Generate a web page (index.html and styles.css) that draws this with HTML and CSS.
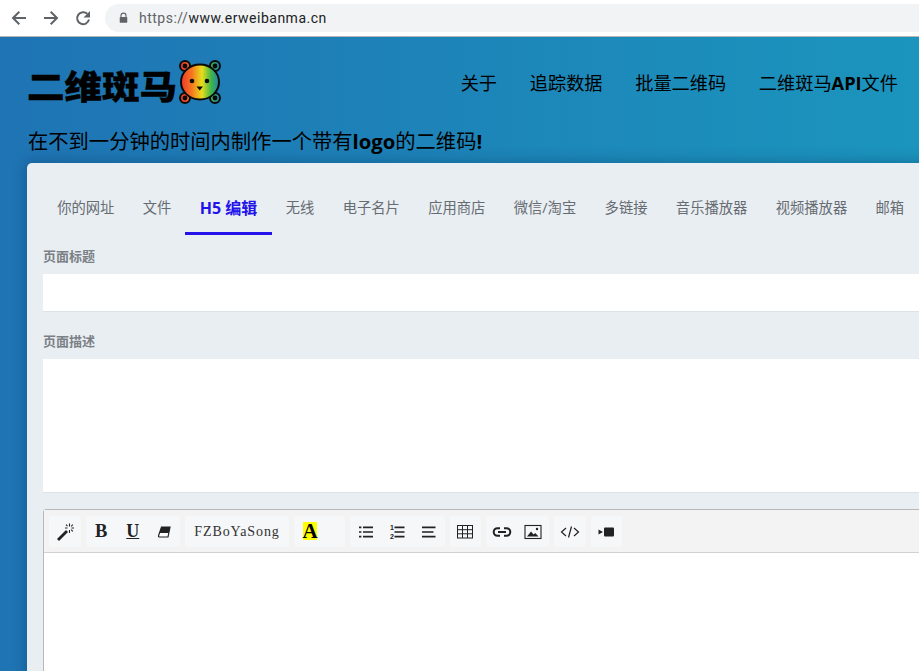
FILE: index.html
```html
<!DOCTYPE html>
<html lang="zh">
<head>
<meta charset="utf-8">
<title>二维斑马</title>
<link rel="stylesheet" href="styles.css">
</head>
<body>
<div class="browserbar">
  <svg class="navicon" viewBox="0 0 16 16"><path d="M15 8H2.500M8.300 1.700L2 8l6.300 6.300" fill="none" stroke="#5f6368" stroke-width="2"/></svg>
  <svg class="navicon" viewBox="0 0 16 16"><path d="M1 8H13.500M7.700 1.700L14 8l-6.300 6.300" fill="none" stroke="#5f6368" stroke-width="2"/></svg>
  <svg class="navicon" viewBox="0 0 16 16"><path d="M14 9.600A6 6 0 1 1 12.300 3.800" fill="none" stroke="#5f6368" stroke-width="2"/><path d="M15 1V7.500H8.500z" fill="#5f6368"/></svg>
  <div class="urlbox">
    <svg class="lock" viewBox="0 0 10 12"><path d="M2.200 5V3.400a2.800 2.800 0 0 1 5.600 0V5" fill="none" stroke="#5f6368" stroke-width="1.200"/><rect x="0.800" y="4.800" width="8.400" height="6.600" rx="1" fill="#5f6368"/></svg>
    <span class="url"><span class="scheme">https://</span>www.erweibanma.cn</span>
  </div>
</div>
<div class="hero">
  <header class="topnav">
    <div class="logo">
      <span class="logotext">二维斑马</span>
      <svg class="logoicon" viewBox="0 0 42 44">
        <defs><linearGradient id="rainbow" gradientUnits="userSpaceOnUse" x1="1" x2="41" y1="0" y2="0"><stop offset="0" stop-color="#ee2f2c"/><stop offset=".3" stop-color="#f5791f"/><stop offset=".55" stop-color="#e6df1c"/><stop offset=".78" stop-color="#3fb548"/><stop offset="1" stop-color="#1d7fb5"/></linearGradient></defs>
        <g fill="url(#rainbow)" stroke="#0a0a0a" stroke-width="2">
          <circle cx="6" cy="6" r="5"/><circle cx="36" cy="6" r="5"/><circle cx="6" cy="38" r="5"/><circle cx="36" cy="38" r="5"/>
          <ellipse cx="21" cy="22" rx="19" ry="17.500"/>
        </g>
        <g fill="#0a0a0a"><circle cx="6" cy="6" r="2.400"/><circle cx="36" cy="6" r="2.400"/><circle cx="6" cy="38" r="2.400"/><circle cx="36" cy="38" r="2.400"/><circle cx="13" cy="21" r="2.300"/><circle cx="28" cy="21" r="2.300"/><path d="M17.500 26.500h6.500L20.700 30.500z"/></g>
      </svg>
    </div>
    <nav class="menu">
      <a>关于</a><a>追踪数据</a><a>批量二维码</a><a>二维斑马<b>API</b>文件</a>
    </nav>
  </header>
  <h1 class="tagline">在不到一分钟的时间内制作一个带有<b>logo</b>的二维码<b>!</b></h1>
  <main class="card">
    <div class="tabs">
      <a class="tab">你的网址</a><a class="tab">文件</a><a class="tab active">H5 编辑</a><a class="tab">无线</a><a class="tab">电子名片</a><a class="tab">应用商店</a><a class="tab">微信/淘宝</a><a class="tab">多链接</a><a class="tab">音乐播放器</a><a class="tab">视频播放器</a><a class="tab">邮箱</a>
    </div>
    <label class="fieldlabel first">页面标题</label>
    <div class="field short"></div>
    <label class="fieldlabel">页面描述</label>
    <div class="field tall"></div>
    <section class="editor">
      <div class="toolbar">
        <div class="group"><span class="btn"><svg viewBox="0 0 20 20"><path d="M2 17L11 8l2 2-9 9z" fill="#222"/><path d="M14.500 1.500v3M14.500 8v3M10 6h2.500M16.500 6H19M17.800 2.700l-1.600 1.600M17.800 9.300l-1.600-1.600M11 2.700l1.500 1.500" stroke="#222" stroke-width="1.100"/></svg></span></div>
        <div class="group">
          <span class="btn glyph bold">B</span>
          <span class="btn glyph under">U</span>
          <span class="btn"><svg viewBox="0 0 20 20"><path d="M7.500 5h8.500l-2 10H5.500a1 1 0 0 1-1-1.200z" fill="#fff" stroke="#222" stroke-width="1.200"/><path d="M7.500 5h8.500l-1.200 6H5.300z" fill="#222"/></svg></span>
        </div>
        <div class="group fontname">FZBoYaSong</div>
        <div class="group colorgroup"><span class="btn glyph coloura">A</span></div>
        <div class="group">
          <span class="btn"><svg viewBox="0 0 20 20"><path d="M7 5.300h10M7 10h10M7 14.700h10M3 5.300h2.400M3 10h2.400M3 14.700h2.400" stroke="#222" stroke-width="1.700"/></svg></span>
          <span class="btn"><svg viewBox="0 0 20 20"><path d="M7.500 5.300h10M7.500 10h10M7.500 14.700h10" stroke="#222" stroke-width="1.700"/><text x="3" y="8" class="num">1</text><text x="3" y="17" class="num">2</text></svg></span>
          <span class="btn"><svg viewBox="0 0 20 20"><path d="M3 5.300h13.500M3 10h11.500M3 14.700h13.500" stroke="#222" stroke-width="1.700"/></svg></span>
        </div>
        <div class="group"><span class="btn"><svg viewBox="0 0 20 20"><rect x="2.500" y="3.500" width="15" height="12.500" fill="none" stroke="#222" stroke-width="1"/><path d="M2.500 7.700h15M2.500 11.800h15M7.500 3.500V16M12.500 3.500V16" stroke="#222" stroke-width="1"/></svg></span></div>
        <div class="group">
          <span class="btn"><svg viewBox="0 0 20 20"><path d="M8 6.200H5.500a3.800 3.800 0 0 0 0 7.600H8M12 6.200h2.500a3.800 3.800 0 0 1 0 7.600H12M6 10h8" fill="none" stroke="#222" stroke-width="2"/></svg></span>
          <span class="btn"><svg viewBox="0 0 20 20"><rect x="2" y="3.500" width="16" height="13" fill="none" stroke="#222" stroke-width="1.100"/><path d="M4 14.500l4-5 2.600 3 1.600-1.600 3.400 3.600z" fill="#222"/><circle cx="14" cy="7" r="1.200" fill="#222"/></svg></span>
        </div>
        <div class="group"><span class="btn"><svg viewBox="0 0 20 20"><path d="M6 6l-4.500 4L6 14M14 6l4.500 4L14 14M11.500 4.500L8.500 15.500" fill="none" stroke="#222" stroke-width="1.200"/></svg></span></div>
        <div class="group"><span class="btn"><svg viewBox="0 0 20 20"><rect x="8" y="5.500" width="10" height="9" rx="1" fill="#222"/><path d="M2.500 7.500L7 10l-4.500 2.500z" fill="#222"/></svg></span></div>
      </div>
      <div class="editarea"></div>
    </section>
  </main>
</div>
</body>
</html>
```
FILE: styles.css
```css
* { box-sizing: border-box; }
html, body { margin: 0; height: 100%; overflow: hidden; }
body {
  width: 919px;
  height: 671px;
  font-family: "Open Sans", "Noto Sans", "Noto Sans CJK SC", sans-serif;
  background: #fff;
}
.browserbar {
  height: 37px;
  display: flex;
  align-items: center;
  padding: 0 0 1px 11px;
  gap: 16px;
  background: #fff;
  border-bottom: 1px solid #b5b5b5;
}
.navicon { width: 16px; height: 16px; flex: none; }
.urlbox {
  flex: 1;
  height: 28px;
  margin-left: -2px;
  margin-right: -20px;
  border-radius: 14px;
  background: #f1f3f4;
  display: flex;
  align-items: center;
  padding-left: 14px;
  gap: 11px;
}
.lock { width: 9px; height: 12px; }
.url {
  font: 14px/1 "Roboto", sans-serif;
  letter-spacing: .5px;
  color: #202124;
}
.scheme { color: #5f6368; }
.hero {
  height: 634px;
  background: linear-gradient(90deg, #1f74b4 0%, #1b95bd 100%);
  padding: 0 0 0 27px;
  overflow: hidden;
}
.topnav {
  height: 90px;
  display: flex;
  align-items: center;
  justify-content: space-between;
  padding: 0 21px 0 0;
}
.logo { display: flex; align-items: center; }
.logotext {
  font: 900 37.5px/1 "Noto Sans CJK SC", sans-serif;
  color: #000;
  margin-top: 5px;
  transform: scaleY(.88);
  -webkit-text-stroke: .5px #000;
}
.logoicon { width: 42px; height: 44px; margin-left: 2px; }
.menu {
  display: flex;
  gap: 32.7px;
  font-size: 18.2px;
  color: #000;
}
.menu a { white-space: nowrap; }
.tagline {
  margin: 0 0 0 1px;
  height: 36px;
  font-size: 20.3px;
  line-height: 28px;
  font-weight: 400;
  color: #000;
  white-space: nowrap;
}
.card {
  width: 950px;
  height: 540px;
  padding: 16px 16px 0;
  background: #e9eef2;
  border-radius: 5px 0 0 0;
  box-shadow: -2px -2px 14px rgba(0, 40, 80, .3);
}
.tabs {
  display: flex;
  height: 56px;
  white-space: nowrap;
}
.tab {
  height: 56px;
  padding: 1px 14.2px 0;
  font-size: 14.3px;
  line-height: 56px;
  color: #666c72;
  border-bottom: 3px solid transparent;
  flex: none;
}
.tab.active {
  color: #2312ea;
  font-size: 16px;
  font-weight: 700;
  padding: 1px 15px 0;
  margin: 0 -.8px;
  border-bottom-color: #2312ea;
}
.fieldlabel {
  display: block;
  height: 18px;
  margin: 13px 0 9px;
  font-size: 13px;
  line-height: 18px;
  font-weight: 700;
  color: #7a8086;
}
.fieldlabel.first { margin-top: 12px; }
.field {
  background: #fff;
  border-bottom: 1px solid #dde2e6;
  margin-right: -20px;
}
.short { height: 38px; margin-bottom: 20px; }
.tall { height: 134px; margin-bottom: 16px; }
.editor {
  border: 1px solid #b8b8b8;
  border-radius: 3px 0 0 0;
  background: #fff;
  height: 170px;
  margin-right: -20px;
}
.toolbar {
  height: 43px;
  display: flex;
  gap: 5px;
  padding: 6px 0 5px 5px;
  background: #f3f3f3;
  border-bottom: 1px solid #d2d2d2;
}
.group {
  display: flex;
  background: #f6f7f9;
  border-radius: 4px;
  flex: none;
}
.btn {
  width: 31.5px;
  height: 31px;
  display: flex;
  align-items: center;
  justify-content: center;
}
.btn svg { width: 20px; height: 20px; }
.num { font: 700 7px "Liberation Sans", sans-serif; fill: #222; }
.glyph {
  font-family: "Liberation Serif", serif;
  font-size: 18px;
  font-weight: 700;
  color: #222;
}
.bold { font-size: 18.5px; }
.under { text-decoration: underline; }
.fontname {
  width: 104px;
  align-items: center;
  justify-content: center;
  font: 14px "Liberation Serif", serif;
  letter-spacing: .9px;
  color: #333;
}
.colorgroup { width: 51px; }
.coloura {
  width: 14px;
  height: 18px;
  margin: 6px 0 0 9px;
  background: #ff0;
  color: #000;
  font-size: 21px;
  line-height: 18px;
}
.editarea { height: 120px; background: #fff; }
```
